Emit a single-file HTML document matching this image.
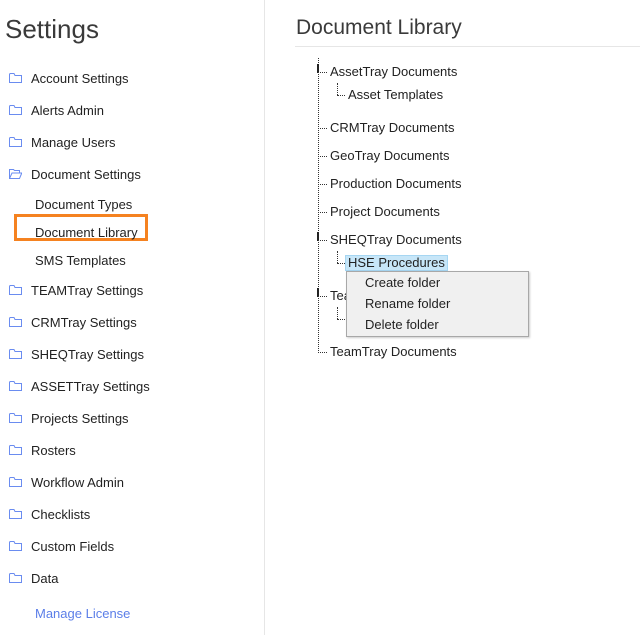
<!DOCTYPE html>
<html><head><meta charset="utf-8"><style>
body{margin:0;width:640px;height:635px;background:#fff;font-family:"Liberation Sans",sans-serif;color:#222;position:relative;overflow:hidden}
.a{position:absolute;white-space:nowrap;font-size:13px;line-height:16px;margin-top:1px}
.f{position:absolute;left:9px;width:13px;height:10px}
.dv{position:absolute;border-left:1px dotted #333;width:0}
.dh{position:absolute;border-top:1px dotted #333;height:0}
.ex{position:absolute;left:317px;width:2px;height:9px;background:#222}
</style></head><body>
<div class="a" style="left:5px;top:12px;font-size:26px;line-height:32px;color:#3a3a3a">Settings</div>
<div style="position:absolute;left:264px;top:0;width:1px;height:635px;background:#e6e6e6"></div>
<div class="a" style="left:296px;top:14px;font-size:21px;line-height:26px;color:#3a3a3a">Document Library</div>
<div style="position:absolute;left:295px;top:46px;width:345px;height:1px;background:#e6e6e6"></div>

<svg width="0" height="0" style="position:absolute"><defs>
<symbol id="fo" viewBox="0 0 13 10"><path d="M0.5 1.5V9.5H12.5V2.5H6L5 0.5H1Z" fill="none" stroke="#6a8cf0" stroke-width="1"/></symbol>
<symbol id="fp" viewBox="0 0 13 10"><path d="M0.5 9.5V0.5H4.5L5.5 1.5H10.5V3.5M0.5 9.5L3 4H12.8L10.5 9.5Z" fill="none" stroke="#6a8cf0" stroke-width="1"/></symbol>
</defs></svg>

<svg class="f" style="top:73px"><use href="#fo"/></svg><div class="a" style="left:31px;top:70px">Account Settings</div>
<svg class="f" style="top:105px"><use href="#fo"/></svg><div class="a" style="left:31px;top:102px">Alerts Admin</div>
<svg class="f" style="top:137px"><use href="#fo"/></svg><div class="a" style="left:31px;top:134px">Manage Users</div>
<svg class="f" style="top:169px"><use href="#fp"/></svg><div class="a" style="left:31px;top:166px">Document Settings</div>
<div class="a" style="left:35px;top:196px">Document Types</div>
<div style="position:absolute;left:14px;top:214px;width:134px;height:27px;border:3px solid #f58220;box-sizing:border-box"></div>
<div class="a" style="left:35px;top:224px">Document Library</div>
<div class="a" style="left:35px;top:252px">SMS Templates</div>
<svg class="f" style="top:285px"><use href="#fo"/></svg><div class="a" style="left:31px;top:282px">TEAMTray Settings</div>
<svg class="f" style="top:317px"><use href="#fo"/></svg><div class="a" style="left:31px;top:314px">CRMTray Settings</div>
<svg class="f" style="top:349px"><use href="#fo"/></svg><div class="a" style="left:31px;top:346px">SHEQTray Settings</div>
<svg class="f" style="top:381px"><use href="#fo"/></svg><div class="a" style="left:31px;top:378px">ASSETTray Settings</div>
<svg class="f" style="top:413px"><use href="#fo"/></svg><div class="a" style="left:31px;top:410px">Projects Settings</div>
<svg class="f" style="top:445px"><use href="#fo"/></svg><div class="a" style="left:31px;top:442px">Rosters</div>
<svg class="f" style="top:477px"><use href="#fo"/></svg><div class="a" style="left:31px;top:474px">Workflow Admin</div>
<svg class="f" style="top:509px"><use href="#fo"/></svg><div class="a" style="left:31px;top:506px">Checklists</div>
<svg class="f" style="top:541px"><use href="#fo"/></svg><div class="a" style="left:31px;top:538px">Custom Fields</div>
<svg class="f" style="top:573px"><use href="#fo"/></svg><div class="a" style="left:31px;top:570px">Data</div>
<div class="a" style="left:35px;top:605px;color:#5b7ee8">Manage License</div>

<div class="dv" style="left:318px;top:58px;height:293px"></div>
<div class="ex" style="top:64px"></div>
<div class="ex" style="top:232px"></div>
<div class="ex" style="top:288px"></div>
<div class="dh" style="left:318px;top:72px;width:9px"></div>
<div class="dh" style="left:318px;top:128px;width:9px"></div>
<div class="dh" style="left:318px;top:156px;width:9px"></div>
<div class="dh" style="left:318px;top:184px;width:9px"></div>
<div class="dh" style="left:318px;top:212px;width:9px"></div>
<div class="dh" style="left:318px;top:240px;width:9px"></div>
<div class="dh" style="left:318px;top:296px;width:9px"></div>
<div class="dh" style="left:318px;top:352px;width:9px"></div>
<div class="dv" style="left:337px;top:83px;height:12px"></div><div class="dh" style="left:337px;top:95px;width:8px"></div>
<div class="dv" style="left:337px;top:251px;height:12px"></div><div class="dh" style="left:337px;top:263px;width:8px"></div>
<div class="dv" style="left:337px;top:307px;height:12px"></div><div class="dh" style="left:337px;top:319px;width:8px"></div>

<div class="a" style="left:330px;top:63px">AssetTray Documents</div>
<div class="a" style="left:348px;top:86px">Asset Templates</div>
<div class="a" style="left:330px;top:119px">CRMTray Documents</div>
<div class="a" style="left:330px;top:147px">GeoTray Documents</div>
<div class="a" style="left:330px;top:175px">Production Documents</div>
<div class="a" style="left:330px;top:203px">Project Documents</div>
<div class="a" style="left:330px;top:231px">SHEQTray Documents</div>
<div style="position:absolute;left:345px;top:255px;width:101px;height:14px;background:#c7e6f8;border:1px solid #a6d6f2"></div>
<div class="a" style="left:348px;top:254px">HSE Procedures</div>
<div class="a" style="left:330px;top:287px">TeamTray Documents</div>
<div class="a" style="left:330px;top:343px">TeamTray Documents</div>

<div style="position:absolute;left:346px;top:271px;width:181px;height:64px;background:#f0f0f0;border:1px solid #a8a8a8;box-shadow:1px 1px 2px rgba(0,0,0,.2)"></div>
<div class="a" style="left:365px;top:274px">Create folder</div>
<div class="a" style="left:365px;top:295px">Rename folder</div>
<div class="a" style="left:365px;top:316px">Delete folder</div>
</body></html>
